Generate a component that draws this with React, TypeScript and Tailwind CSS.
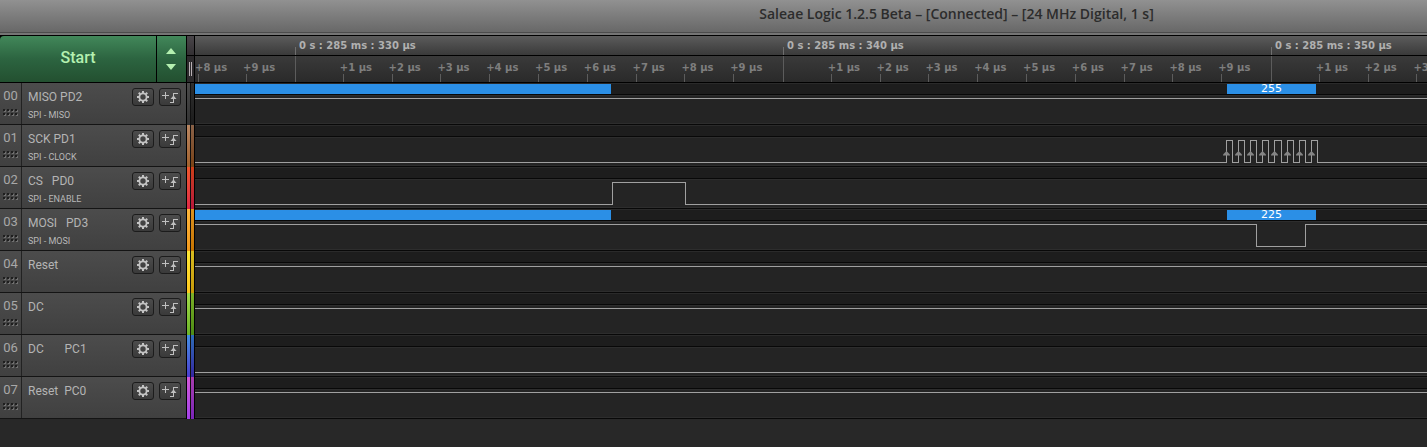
import { useState } from 'react';

type Frame = { from: number; width: number; label?: string };

type Channel = {
  id: string;
  name: string;
  role?: string;
  light: string;
  dark: string;
  wave: string;
  arrows?: number[];
  frames?: Frame[];
};

// y of the two logic levels inside a lane
const HIGH = 'M0 3.5H4000';
const LOW = 'M0 25.5H4000';

const CLOCK_EDGES = [
  [1031, 1037],
  [1043, 1049],
  [1055, 1061],
  [1067, 1073],
  [1079, 1086],
  [1092, 1098],
  [1104, 1110],
  [1116, 1122],
];

const clockWave =
  'M0 25.5' +
  CLOCK_EDGES.map(([up, down]) => `H${up}.5V3.5H${down}.5V25.5`).join('') +
  'H4000';

const channels: Channel[] = [
  {
    id: '00',
    name: 'MISO PD2',
    role: 'SPI - MISO',
    light: 'from-[#4a4a4a] to-[#333333]',
    dark: 'from-[#303030] to-[#1c1c1c]',
    wave: HIGH,
    frames: [
      { from: 0, width: 416 },
      { from: 1032, width: 89, label: '255' },
    ],
  },
  {
    id: '01',
    name: 'SCK PD1',
    role: 'SPI - CLOCK',
    light: 'from-[#b98763] to-[#a3622c]',
    dark: 'from-[#8a6248] to-[#7a4314]',
    wave: clockWave,
    arrows: CLOCK_EDGES.map(([up]) => up),
  },
  {
    id: '02',
    name: 'CS   PD0',
    role: 'SPI - ENABLE',
    light: 'from-[#f0582c] to-[#e02846]',
    dark: 'from-[#cc3f16] to-[#b8143a]',
    wave: 'M0 25.5H417.5V3.5H490.5V25.5H4000',
  },
  {
    id: '03',
    name: 'MOSI   PD3',
    role: 'SPI - MOSI',
    light: 'from-[#ffb73c] to-[#f39a1c]',
    dark: 'from-[#dc9420] to-[#c87400]',
    wave: 'M0 3.5H1061.5V25.5H1110.5V3.5H4000',
    frames: [
      { from: 0, width: 416 },
      { from: 1032, width: 89, label: '225' },
    ],
  },
  {
    id: '04',
    name: 'Reset',
    light: 'from-[#ffe936] to-[#ffc81e]',
    dark: 'from-[#d8bc20] to-[#c89a08]',
    wave: HIGH,
  },
  {
    id: '05',
    name: 'DC',
    light: 'from-[#a4dc4a] to-[#6cb428]',
    dark: 'from-[#7cb028] to-[#4c8c14]',
    wave: HIGH,
  },
  {
    id: '06',
    name: 'DC       PC1',
    light: 'from-[#4490e4] to-[#4a3cd0]',
    dark: 'from-[#2c6cb8] to-[#3424a0]',
    wave: LOW,
  },
  {
    id: '07',
    name: 'Reset  PC0',
    light: 'from-[#d458d8] to-[#a440e8]',
    dark: 'from-[#a83cac] to-[#7c24b8]',
    wave: HIGH,
  },
];

const majors = [
  { label: '330', ticks: [1, 2, 3, 4, 5, 6, 7, 8, 9] },
  { label: '340', ticks: [1, 2, 3, 4, 5, 6, 7, 8, 9] },
  { label: '350', ticks: [1, 2, 3] },
];

function Handle() {
  return (
    <svg className="h-2 w-4" viewBox="0 0 16 8" shapeRendering="crispEdges">
      {[0, 4].map((y) =>
        [0, 4, 8, 12].map((x) => (
          <g key={`${x}-${y}`}>
            <rect x={x} y={y} width="2" height="2" fill="#1e1e1e" />
            <rect x={x + 1} y={y + 2} width="2" height="1" fill="#707070" />
            <rect x={x + 2} y={y + 1} width="1" height="1" fill="#707070" />
          </g>
        )),
      )}
    </svg>
  );
}

function GearIcon() {
  return (
    <svg className="size-3" viewBox="0 0 12 12" fill="none" stroke="#c4c4c4">
      <circle cx="6" cy="6" r="3.6" strokeWidth="1.8" />
      {[0, 45, 90, 135, 180, 225, 270, 315].map((a) => (
        <path
          key={a}
          d="M6 0V2.2"
          strokeWidth="2"
          transform={`rotate(${a} 6 6)`}
        />
      ))}
    </svg>
  );
}

function TriggerIcon() {
  return (
    <svg
      className="h-3 w-4"
      viewBox="0 0 16 12"
      fill="none"
      stroke="#c0c0c0"
      shapeRendering="crispEdges"
    >
      <path d="M0 4.5H7M3.5 1V8" />
      <path d="M8 11.5H11.5V2.5H16" />
      <path
        d="M11.5 4.5L14.5 8H8.5Z"
        fill="#c0c0c0"
        stroke="none"
        shapeRendering="auto"
      />
    </svg>
  );
}

function IconButton({
  label,
  children,
}: {
  label: string;
  children: React.ReactNode;
}) {
  return (
    <button
      type="button"
      aria-label={label}
      className="flex h-[18px] w-[22px] items-center justify-center rounded-[3px] border border-[#1c1c1c] bg-linear-to-b from-[#4c4c4c] to-[#3a3a3a]"
    >
      {children}
    </button>
  );
}

function ChannelRow({ channel }: { channel: Channel }) {
  return (
    <div className="flex h-[42px]">
      <div className="flex w-[186px] shrink-0 border-b border-[#141414] bg-linear-to-b from-[#4c4c4c] to-[#404040]">
        <div className="flex w-[22px] flex-col items-center border-r border-[#222222] pt-[5px]">
          <span className="text-[13px] leading-4 text-[#a8a8a8]">
            {channel.id}
          </span>
          <div className="pt-[5px]">
            <Handle />
          </div>
        </div>
        <div className="min-w-0 flex-1 pt-1.5 pl-1.5">
          <div className="text-xs leading-4 whitespace-pre text-[#b4b4b4]">
            {channel.name}
          </div>
          {channel.role && (
            <div className="pt-1 text-[9px] leading-3 text-[#b8b8b8]">
              {channel.role}
            </div>
          )}
        </div>
        <div className="flex gap-[5px] pt-[5px] pr-[5px]">
          <IconButton label={`Settings for channel ${channel.id}`}>
            <GearIcon />
          </IconButton>
          <IconButton label={`Trigger for channel ${channel.id}`}>
            <TriggerIcon />
          </IconButton>
        </div>
      </div>

      <div className="flex w-[9px] shrink-0 border-x border-black">
        <div className={`w-[3px] bg-linear-to-b ${channel.light}`} />
        <div className="w-px bg-black/60" />
        <div className={`flex-1 bg-linear-to-b ${channel.dark}`} />
      </div>

      <div className="min-w-0 flex-1 overflow-hidden">
        <div className="relative h-3 overflow-hidden border-t border-b border-t-[#2a2a2a] border-b-[#080808] bg-[#1d1d1d]">
          {channel.frames?.map((f) => (
            <div
              key={f.from}
              className="absolute inset-y-0 bg-[#2b8fe6] text-center font-['DejaVu_Sans'] text-[11px] leading-[10px] text-white"
              style={{ left: f.from, width: f.width }}
            >
              {f.label}
            </div>
          ))}
        </div>
        <div className="h-[30px] border-b border-[#080808] bg-[#242424]">
          <svg
            className="block h-[29px] w-full"
            fill="none"
            stroke="#a0a0a0"
            shapeRendering="crispEdges"
          >
            <path d="M0 0.5H4000M0 28.5H4000" stroke="#2d2d2d" />
            <path d={channel.wave} />
            {channel.arrows?.map((x) => (
              <path
                key={x}
                d={`M${x + 0.5} 14L${x + 4} 17.5V18.5H${x - 3}V17.5Z`}
                fill="#858585"
                stroke="none"
                shapeRendering="auto"
              />
            ))}
          </svg>
        </div>
      </div>
    </div>
  );
}

function Minor({ n }: { n: number }) {
  return (
    <div className="w-[49px] min-w-0 pt-1.5 whitespace-nowrap">
      <div className="h-3 leading-3">+{n} µs</div>
      <div className="ml-[3px] h-2 w-px bg-[#5c5c5c]" />
    </div>
  );
}

function Ruler() {
  return (
    <div className="min-w-0 flex-1 overflow-hidden font-['DejaVu_Sans'] text-[10px] font-bold">
      <div className="flex h-5 border-b border-black bg-linear-to-b from-[#5c5c5c] to-[#3a3a3a] pl-[100px] text-[#b0b0b0]">
        {majors.map((m) => (
          <div
            key={m.label}
            className="flex w-[488px] shrink-0 items-end gap-[3px]"
          >
            <div className="h-2 w-px bg-[#6e6e6e]" />
            <span className="h-full leading-5">
              0 s : 285 ms : {m.label} µs
            </span>
          </div>
        ))}
      </div>
      <div className="flex h-[27px] border-b border-black bg-linear-to-b from-[#3a3a3a] to-[#2a2a2a] text-[#7e7e7e]">
        <div className="flex w-24 shrink-0">
          <Minor n={8} />
          <Minor n={9} />
        </div>
        {majors.map((m) => (
          <div key={m.label} className="grid w-[488px] shrink-0 grid-cols-10">
            <div className="ml-1 h-full w-px bg-[#5c5c5c]" />
            {m.ticks.map((n) => (
              <Minor key={n} n={n} />
            ))}
          </div>
        ))}
      </div>
    </div>
  );
}

function StartControls() {
  const [running, setRunning] = useState(false);

  return (
    <div className="flex h-[47px] w-[186px] shrink-0 border-b border-black bg-black text-[#b4f0b0]">
      <button
        type="button"
        aria-pressed={running}
        onClick={() => setRunning(!running)}
        className="flex-1 rounded-tl-[4px] bg-linear-to-b from-[#42885a] via-[#2c6440] to-[#235030] pb-0.5 text-base font-medium"
      >
        Start
      </button>
      <div className="ml-px flex w-[29px] flex-col bg-linear-to-b from-[#42885a] via-[#2c6440] to-[#235030] pr-px">
        <button
          type="button"
          aria-label="Increase"
          className="flex flex-1 items-end justify-center pb-[5px]"
        >
          <svg className="h-1.5 w-2.5" viewBox="0 0 10 6" fill="currentColor">
            <path d="M5 0L10 6H0Z" />
          </svg>
        </button>
        <button
          type="button"
          aria-label="Decrease"
          className="flex flex-1 items-start justify-center pt-[5px]"
        >
          <svg className="h-1.5 w-2.5" viewBox="0 0 10 6" fill="currentColor">
            <path d="M5 6L10 0H0Z" />
          </svg>
        </button>
      </div>
    </div>
  );
}

export default function App() {
  return (
    <div className="min-h-screen overflow-hidden bg-[#282828] font-['Roboto',sans-serif]">
      <header className="h-9 border-b border-black bg-[#757575]">
        <div className="h-[33px] border-b border-[#4c4c4c] bg-linear-to-b from-[#919191] to-[#686868] pl-[486px] text-center">
          <h1 className="font-['Open_Sans'] text-sm leading-7 font-semibold text-[#2c2c2c]">
            Saleae Logic 1.2.5 Beta – [Connected] – [24 MHz Digital, 1 s]
          </h1>
        </div>
      </header>

      <div className="flex">
        <StartControls />
        <div className="w-[9px] shrink-0 border-x border-b border-black">
          <div className="h-5 border-b border-black bg-linear-to-b from-[#4a464a] to-[#333033]" />
          <div className="flex h-[26px] items-center justify-center gap-px bg-[#2c2a2c]">
            <div className="h-3.5 w-px bg-[#b8b0b4]" />
            <div className="h-3.5 w-px bg-[#b8b0b4]" />
          </div>
        </div>
        <Ruler />
      </div>

      <main>
        {channels.map((c) => (
          <ChannelRow key={c.id} channel={c} />
        ))}
      </main>
    </div>
  );
}
